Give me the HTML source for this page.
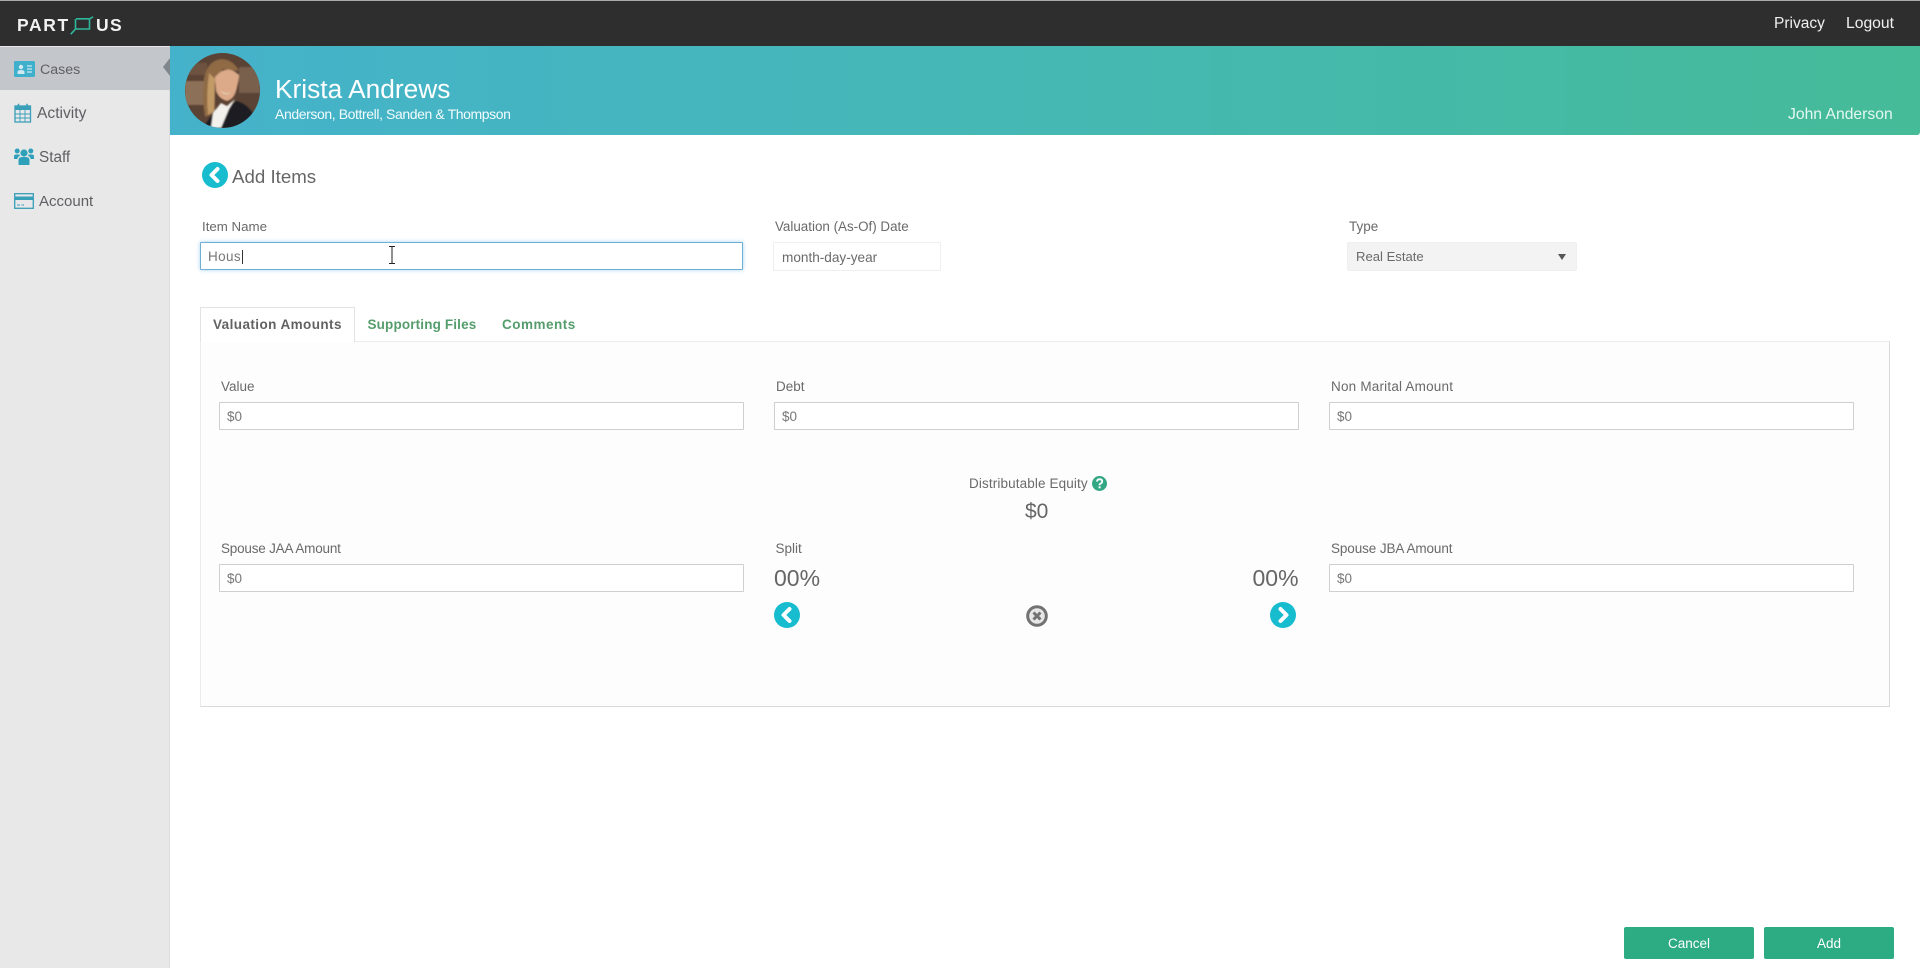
<!DOCTYPE html>
<html lang="en"><head><meta charset="utf-8"><title>Partnous - Add Items</title>
<style>
html,body{margin:0;padding:0;width:1920px;height:968px;overflow:hidden;background:#fff}
body{position:relative;font-family:"Liberation Sans",sans-serif;color:#666}
.a{position:absolute;box-sizing:border-box}
.t{position:absolute;white-space:nowrap;line-height:20px;height:20px}
.lb{font-size:13.5px;color:#6a6a6a}
.in{position:absolute;box-sizing:border-box;background:#fff;border:1px solid #cfcfcf;border-radius:1px;font-size:13.5px;color:#777;line-height:28px;padding-left:7px;height:28px}
svg{position:absolute;display:block}
.nav{font-size:15px;color:#5f5f63}
</style></head><body>
<!-- top bar -->
<div class="a" style="left:0;top:0;width:1920px;height:46px;background:#2e2e2e;border-top:1px solid #aaa"></div>
<div class="t" style="left:17px;top:15px;font-size:17.5px;font-weight:bold;color:#f2f2f2;letter-spacing:1.6px;line-height:21px;height:21px">PART</div>
<svg style="left:70px;top:16px" width="24" height="19" viewBox="0 0 24 19"><path d="M6 2.8H19.5V13H5.5V3M19.5 3L23 .8M5.5 13L.8 18.2" fill="none" stroke="#2fb79c" stroke-width="1.6"/></svg>
<div class="t" style="left:96px;top:15px;font-size:17.5px;font-weight:bold;color:#f2f2f2;letter-spacing:1.4px;line-height:21px;height:21px">US</div>
<div class="t" style="left:1774px;top:14px;font-size:15.5px;color:#f0f0f0">Privacy</div>
<div class="t" style="left:1846px;top:14px;font-size:15.7px;color:#f0f0f0">Logout</div>
<!-- sidebar -->
<div class="a" style="left:0;top:46px;width:170px;height:922px;background:#e8e8e9;border-right:1px solid #dcdcdc"></div>
<div class="a" style="left:0;top:47px;width:170px;height:43px;background:#c3c6cb"></div>
<div class="a" style="left:163px;top:58px;width:0;height:0;border-top:9px solid transparent;border-bottom:9px solid transparent;border-right:7px solid #7f868c"></div>
<svg style="left:14px;top:61px" width="22" height="17" viewBox="0 0 22 17"><rect width="21" height="16" rx="1.5" fill="#3fb0cc"/><circle cx="7" cy="6" r="2.2" fill="#cfe9f1"/><path d="M3.5 13V11Q3.5 9 7 9T10.5 11V13Z" fill="#cfe9f1"/><path d="M13 5H18M13 8H18M13 11H18" stroke="#cfe9f1" stroke-width="1.2"/></svg>
<div class="t nav" style="left:40px;top:60px;font-size:14.2px">Cases</div>
<svg style="left:14px;top:103px" width="18" height="20" viewBox="0 0 18 20"><rect x="1" y="3" width="15.5" height="16" fill="#e8e8ea" stroke="#3a9fb8" stroke-width="1.3"/><rect x="1" y="3" width="15.5" height="4" fill="#3a9fb8"/><path d="M4.5 .8V5M13 .8V5" stroke="#3a9fb8" stroke-width="1.6"/><path d="M1 11H16.5M1 15H16.5M6 7V19M11 7V19" stroke="#3a9fb8" stroke-width=".9"/></svg>
<div class="t nav" style="left:37px;top:104px;font-size:15.6px">Activity</div>
<svg style="left:14px;top:148px" width="20" height="18" viewBox="0 0 20 18"><g fill="#2fa0b9"><circle cx="10" cy="5" r="3.6"/><circle cx="3.2" cy="3" r="2.5"/><circle cx="16.8" cy="3" r="2.5"/><path d="M4.5 17V12Q4.5 9 8 9H12Q15.5 9 15.5 12V17Z"/><path d="M0 11V8.5Q0 6.5 2 6.5H5.5L6 8Q3.5 8.5 3.5 11Z"/><path d="M20 11V8.5Q20 6.5 18 6.5H14.5L14 8Q16.5 8.5 16.5 11Z"/></g></svg>
<div class="t nav" style="left:39px;top:148px;font-size:15.3px">Staff</div>
<svg style="left:14px;top:193px" width="20" height="16" viewBox="0 0 20 16"><rect x=".7" y=".7" width="18.6" height="14.6" fill="#e8e8ea" stroke="#3a9fb8" stroke-width="1.3"/><rect x="1" y="3.5" width="18" height="3.5" fill="#3a9fb8"/><path d="M3 12H6M7.5 12H10" stroke="#3a9fb8" stroke-width="1.1"/></svg>
<div class="t nav" style="left:39px;top:192px;font-size:15px">Account</div>
<!-- banner -->
<div class="a" style="left:170px;top:46px;width:1750px;height:89px;background:linear-gradient(90deg,#45b2cb 0%,#45b8b4 50%,#45bb98 100%);border-bottom-right-radius:3px"></div>
<svg style="left:185px;top:53px" width="75" height="75" viewBox="0 0 75 75"><defs><clipPath id="c"><circle cx="37.5" cy="37.5" r="37.5"/></clipPath><filter id="b" x="-5%" y="-5%" width="110%" height="110%"><feGaussianBlur stdDeviation=".7"/></filter></defs><g clip-path="url(#c)"><rect width="75" height="75" fill="#5a4234"/><g filter="url(#b)"><rect x="0" y="28" width="20" height="24" fill="#8d7058"/><rect x="2" y="10" width="20" height="12" fill="#6e5240"/><rect x="54" y="14" width="21" height="26" fill="#78604e"/><path d="M36 6Q22 8 19 26Q17 46 20 64L30 60L30 30L38 16L54 18Q48 6 36 6Z" fill="#8f6b45"/><path d="M24 20Q21 42 23 62L29 58L30 26Z" fill="#c29a66"/><path d="M30 24Q42 10 54 22Q54 26 52 34Q50 46 42 48Q34 46 31 38Z" fill="#dcaa88"/><path d="M36 38Q43 44 49 36Q45 41 42 41Q38 41 36 38Z" fill="#fbf5ef"/><path d="M18 75L28 60L40 54L52 48Q70 54 72 75Z" fill="#1c1d22"/><path d="M26 75L28 60L36 50L42 53L50 46L44 56L36 75Z" fill="#f3f1ec"/></g></g></svg>
<div class="t" style="left:275px;top:74px;font-size:26.3px;color:#fff;line-height:30px;height:30px">Krista Andrews</div>
<div class="t" style="left:275px;top:104px;font-size:14px;color:#f2fbfc;letter-spacing:-.4px">Anderson, Bottrell, Sanden &amp; Thompson</div>
<div class="t" style="left:1788px;top:105px;font-size:15.7px;color:#e5f7f0">John Anderson</div>
<!-- header -->
<svg style="left:202px;top:162px" width="26" height="26" viewBox="0 0 26 26"><circle cx="13" cy="13" r="13" fill="#17bccf"/><path d="M15.5 7L9.5 13L15.5 19" fill="none" stroke="#fff" stroke-width="4" stroke-linecap="round" stroke-linejoin="round"/></svg>
<div class="t" style="left:232px;top:165px;font-size:18.7px;color:#666;line-height:24px;height:24px">Add Items</div>
<!-- top form -->
<div class="t lb" style="left:202px;top:217px;font-size:13.3px">Item Name</div>
<div class="in" style="left:200px;top:242px;width:543px;border:1px solid #6fb0d2;box-shadow:0 0 4px rgba(102,175,233,.55);letter-spacing:.35px">Hous</div>
<div class="a" style="left:242px;top:250px;width:1px;height:14px;background:#333"></div>
<svg style="left:388px;top:246px" width="8" height="18" viewBox="0 0 8 18"><path d="M1 .5H3.5L4 1L4.5 .5H7M4 1V17M1 17.5H3.5L4 17L4.5 17.5H7" fill="none" stroke="#222" stroke-width="1"/></svg>
<div class="t lb" style="left:775px;top:217px;font-size:13.4px">Valuation (As-Of) Date</div>
<div class="in" style="left:773px;top:242px;width:168px;height:29px;border-color:#efefef;padding-left:8px;line-height:29px;color:#6a6a6a;font-size:13.6px">month-day-year</div>
<div class="t lb" style="left:1349px;top:217px">Type</div>
<div class="a" style="left:1347px;top:242px;width:230px;height:29px;background:#f3f3f3;border:1px solid #efefef;border-radius:2px"></div>
<div class="t" style="left:1356px;top:246.5px;font-size:13.1px;color:#6a6a6a">Real Estate</div>
<div class="a" style="left:1558px;top:254px;width:0;height:0;border-left:4px solid transparent;border-right:4px solid transparent;border-top:6px solid #555"></div>
<!-- panel -->
<div class="a" style="left:200px;top:341px;width:1690px;height:366px;background:#fdfdfd;border:1px solid #ebebeb;border-right-color:#d9d9d9;border-bottom-color:#d9d9d9"></div>
<div class="a" style="left:200px;top:307px;width:155px;height:36px;background:#fff;border:1px solid #e3e3e3;border-bottom:1px solid #fdfdfd"></div>
<div class="t" style="left:213px;top:315px;font-size:13.5px;font-weight:bold;color:#626262;letter-spacing:.42px">Valuation Amounts</div>
<div class="t" style="left:367.5px;top:315px;font-size:13.5px;font-weight:bold;color:#559d6c;letter-spacing:.15px">Supporting Files</div>
<div class="t" style="left:502px;top:315px;font-size:13.5px;font-weight:bold;color:#559d6c;letter-spacing:.5px">Comments</div>
<!-- row 1 -->
<div class="t lb" style="left:221px;top:377px">Value</div>
<div class="in" style="left:219px;top:402px;width:525px">$0</div>
<div class="t lb" style="left:776px;top:377px">Debt</div>
<div class="in" style="left:774px;top:402px;width:525px">$0</div>
<div class="t lb" style="left:1331px;top:377px;letter-spacing:.2px">Non Marital Amount</div>
<div class="in" style="left:1329px;top:402px;width:525px">$0</div>
<!-- equity -->
<div class="t lb" style="left:969px;top:474px;letter-spacing:.12px">Distributable Equity</div>
<svg style="left:1092px;top:476px" width="15" height="15" viewBox="0 0 15 15"><circle cx="7.5" cy="7.5" r="7.5" fill="#34a884"/><path d="M5 5.6Q5.2 3.2 7.6 3.2Q10.2 3.3 10.2 5.4Q10.2 6.8 8.6 7.6Q7.6 8.1 7.6 9.2" fill="none" stroke="#fff" stroke-width="1.8"/><rect x="6.6" y="10.3" width="2" height="2" fill="#fff"/></svg>
<div class="t" style="left:1025px;top:500px;font-size:21px;color:#666;line-height:24px;height:24px">$0</div>
<!-- row 2 -->
<div class="t lb" style="left:221px;top:539px;letter-spacing:-.2px">Spouse JAA Amount</div>
<div class="in" style="left:219px;top:564px;width:525px">$0</div>
<div class="t lb" style="left:775.5px;top:539px">Split</div>
<div class="t" style="left:774px;top:565px;font-size:23px;color:#666;line-height:26px;height:26px">00%</div>
<div class="t" style="left:1252.5px;top:565px;font-size:23px;color:#666;line-height:26px;height:26px">00%</div>
<div class="t lb" style="left:1331px;top:539px;letter-spacing:-.1px">Spouse JBA Amount</div>
<div class="in" style="left:1329px;top:564px;width:525px">$0</div>
<svg style="left:774px;top:602px" width="26" height="26" viewBox="0 0 26 26"><circle cx="13" cy="13" r="13" fill="#17bccf"/><path d="M15.5 7L9.5 13L15.5 19" fill="none" stroke="#fff" stroke-width="4" stroke-linecap="round" stroke-linejoin="round"/></svg>
<svg style="left:1270px;top:602px" width="26" height="26" viewBox="0 0 26 26"><circle cx="13" cy="13" r="13" fill="#17bccf"/><path d="M10.5 7L16.5 13L10.5 19" fill="none" stroke="#fff" stroke-width="4" stroke-linecap="round" stroke-linejoin="round"/></svg>
<svg style="left:1026px;top:605px" width="22" height="22" viewBox="0 0 22 22"><circle cx="11" cy="11" r="9.3" fill="#e6e6e6" stroke="#727272" stroke-width="3"/><path d="M7.5 7.5L14.5 14.5M14.5 7.5L7.5 14.5" stroke="#727272" stroke-width="3"/></svg>
<!-- buttons -->
<div class="a" style="left:1624px;top:927px;width:130px;height:32px;background:#2dab82;border-radius:2px;color:#fff;font-size:13.5px;line-height:33px;text-align:center">Cancel</div>
<div class="a" style="left:1764px;top:927px;width:130px;height:32px;background:#2dab82;border-radius:2px;color:#fff;font-size:13.5px;line-height:33px;text-align:center">Add</div>
</body></html>
